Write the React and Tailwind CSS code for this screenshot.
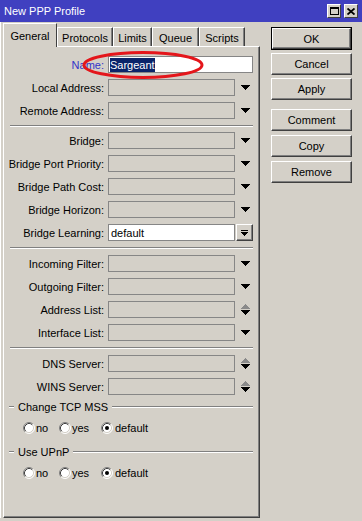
import React from 'react';

const DOWN = 'M0 0h9v1h-1v1h-1v1h-1v1h-1v1h-1v-1h-1v-1h-1v-1h-1v-1h-1z';
const UP = 'M4 0h1v1h1v1h1v1h1v1h1v1h-9v-1h1v-1h1v-1h1v-1h1z';

function DownArrow() {
  return (
    <svg width="9" height="5" viewBox="0 0 9 5">
      <path d={DOWN} fill="#000" />
    </svg>
  );
}

function SpinArrow() {
  return (
    <svg width="9" height="12" viewBox="0 0 9 12">
      <path d={UP} fill="#8a8a8a" />
      <path d={DOWN} fill="#000" transform="translate(0 6)" />
    </svg>
  );
}

function Field({ label, icon = 'down' }) {
  return (
    <div className="flex h-[23px] items-center">
      <div className="w-[100px] text-right">{label}</div>
      <div className="ml-[4px] h-[17px] w-[127px] border border-[#868686]" />
      <div className="flex w-[20px] justify-center">
        {icon === 'spin' ? <SpinArrow /> : <DownArrow />}
      </div>
    </div>
  );
}

function Sep({ className }) {
  return (
    <div className={`flex items-center ${className}`}>
      <div className="mx-[6px] h-[2px] flex-1 border-t border-b border-t-[#808080] border-b-white" />
    </div>
  );
}

function Group({ label }) {
  return (
    <div className="flex h-[18px] items-center pl-[5px] pr-[6px]">
      <div className="h-[2px] w-[5px] border-t border-b border-t-[#808080] border-b-white" />
      <span className="px-[4px]">{label}</span>
      <div className="h-[2px] flex-1 border-t border-b border-t-[#808080] border-b-white" />
    </div>
  );
}

function Radio({ checked }) {
  return (
    <svg width="12" height="12" viewBox="0 0 12 12">
      <circle cx="6" cy="6" r="5" fill="#fff" />
      <path d="M2.11 9.89A5.5 5.5 0 0 1 9.89 2.11" stroke="#808080" fill="none" />
      <path d="M2.82 9.18A4.5 4.5 0 0 1 9.18 2.82" stroke="#404040" fill="none" />
      <path d="M9.89 2.11A5.5 5.5 0 0 1 2.11 9.89" stroke="#fff" fill="none" />
      <path d="M9.18 2.82A4.5 4.5 0 0 1 2.82 9.18" stroke="#d4d0c8" fill="none" />
      {checked && <circle cx="6" cy="6" r="2" fill="#000" />}
    </svg>
  );
}

function RadioRow() {
  return (
    <div className="flex h-[24px] items-center pl-[19px]">
      <div className="flex w-[36px] items-center gap-[1px]">
        <Radio />
        <span>no</span>
      </div>
      <div className="flex w-[42px] items-center gap-[1px]">
        <Radio />
        <span>yes</span>
      </div>
      <div className="flex items-center gap-[2px]">
        <Radio checked />
        <span>default</span>
      </div>
    </div>
  );
}

function Tab({ label, className, active }) {
  if (active) {
    return (
      <div className={`relative z-10 mt-[1px] flex h-[24px] justify-center border-l border-t border-r border-l-white border-t-white border-r-[#404040] bg-[#d4d0c8] pt-[5px] ${className}`}>
        {label}
      </div>
    );
  }
  return (
    <div className={`mt-[5px] flex h-[19px] justify-center border-l border-t border-r border-l-white border-t-white border-r-[#404040] pt-[3px] shadow-[inset_-1px_0_0_#808080] ${className}`}>
      {label}
    </div>
  );
}

function Btn({ children, def, className }) {
  return (
    <div className={`w-[81px] ${def ? 'h-[23px] border border-black' : 'h-[22px]'} ${className}`}>
      <div className="flex h-full items-center justify-center border border-l-white border-t-white border-r-[#404040] border-b-[#404040] shadow-[inset_-1px_-1px_0_#808080]">
        {children}
      </div>
    </div>
  );
}

export default function App() {
  return (
    <div className="relative h-[521px] w-[362px] overflow-hidden bg-[#d4d0c8] font-['Liberation_Sans',Arial,sans-serif] text-[11px] leading-[14px] text-black">
      {/* title bar */}
      <div className="flex h-[22px] items-center justify-between bg-[#4040c0] pl-[4px] pr-[4px] text-white">
        <span>New PPP Profile</span>
        <div className="flex gap-[3px]">
          <div className="flex h-[14px] w-[14px] items-center justify-center border border-l-white border-t-white border-r-[#404040] border-b-[#404040] bg-[#d4d0c8]">
            <div className="h-[8px] w-[9px] border border-t-2 border-black" />
          </div>
          <div className="flex h-[14px] w-[14px] items-center justify-center border border-l-white border-t-white border-r-[#404040] border-b-[#404040] bg-[#d4d0c8]">
            <svg width="8" height="7" viewBox="0 0 8 7">
              <path d="M0.5 0.5L7.5 6.5M7.5 0.5L0.5 6.5" stroke="#000" strokeWidth="1.8" />
            </svg>
          </div>
        </div>
      </div>

      <div className="flex border-l border-l-white">
        {/* left: tabs + panel */}
        <div className="ml-[2px] w-[257px]">
          <div className="flex h-[24px] items-start">
            <Tab label="General" className="w-[54px]" active />
            <Tab label="Protocols" className="w-[56px]" />
            <Tab label="Limits" className="w-[39px]" />
            <Tab label="Queue" className="w-[47px]" />
            <Tab label="Scripts" className="w-[46px]" />
          </div>
          <div className="flex h-[472px] flex-col border border-l-white border-t-white border-r-[#404040] border-b-[#404040] pt-[6px] shadow-[inset_-1px_-1px_0_#808080]">
            <div className="flex h-[23px] items-center">
              <div className="w-[100px] text-right text-[#3232c8]">Name:</div>
              <div className="ml-[4px] flex h-[17px] w-[145px] items-center border border-[#868686] bg-white pl-[1px]">
                <span className="bg-[#0a246a] text-white">Sargeant</span>
              </div>
            </div>
            <Field label="Local Address:" />
            <Field label="Remote Address:" />
            <Sep className="h-[7px]" />
            <Field label="Bridge:" />
            <Field label="Bridge Port Priority:" />
            <Field label="Bridge Path Cost:" />
            <Field label="Bridge Horizon:" />
            <div className="flex h-[23px] items-center">
              <div className="w-[100px] text-right">Bridge Learning:</div>
              <div className="ml-[4px] flex h-[17px] w-[127px] items-center border border-[#868686] bg-white pl-[2px]">
                default
              </div>
              <div className="ml-[1px] flex h-[17px] w-[17px] items-center justify-center border border-l-white border-t-white border-r-[#404040] border-b-[#404040] shadow-[inset_-1px_-1px_0_#808080]">
                <svg width="7" height="6" viewBox="0 0 7 6">
                  <rect x="0" y="0" width="7" height="1" fill="#000" />
                  <path d="M0 2h7v1h-1v1h-1v1h-1v1h-1v-1h-1v-1h-1v-1h-1z" fill="#000" />
                </svg>
              </div>
            </div>
            <Sep className="h-[8px]" />
            <Field label="Incoming Filter:" />
            <Field label="Outgoing Filter:" />
            <Field label="Address List:" icon="spin" />
            <Field label="Interface List:" />
            <Sep className="h-[8px]" />
            <Field label="DNS Server:" icon="spin" />
            <Field label="WINS Server:" icon="spin" />
            <Group label="Change TCP MSS" />
            <RadioRow />
            <div className="mt-[3px]">
              <Group label="Use UPnP" />
            </div>
            <RadioRow />
          </div>
        </div>

        {/* right: buttons */}
        <div className="ml-[11px] mt-[5px] flex flex-col">
          <Btn def>OK</Btn>
          <Btn className="mt-[3px]">Cancel</Btn>
          <Btn className="mt-[3px]">Apply</Btn>
          <Btn className="mt-[9px]">Comment</Btn>
          <Btn className="mt-[4px]">Copy</Btn>
          <Btn className="mt-[4px]">Remove</Btn>
        </div>
      </div>

      {/* red annotation ring */}
      <svg className="absolute left-[81px] top-[50px]" width="124" height="30" viewBox="0 0 124 30">
        <ellipse cx="62" cy="15" rx="59" ry="12.5" fill="none" stroke="#e4161b" strokeWidth="3" />
      </svg>
    </div>
  );
}
